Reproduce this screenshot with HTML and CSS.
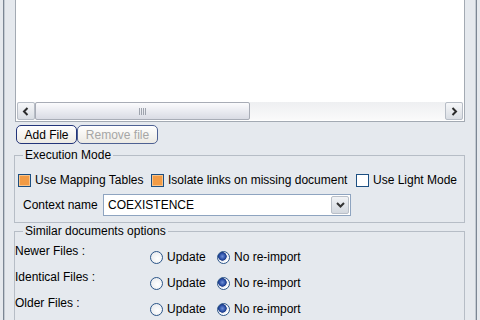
FILE: index.html
```html
<!DOCTYPE html>
<html>
<head>
<meta charset="utf-8">
<link rel="stylesheet" href="styles.css">
</head>
<body>
<div class="window">
  <div class="list">
    <div class="list-body"></div>
    <div class="hscroll">
      <div class="sbtn"><svg width="8" height="9" viewBox="0 0 8 9"><path d="M5.5 1 L2 4.5 L5.5 8" fill="none" stroke="#2b2b2b" stroke-width="2"/></svg></div>
      <div class="track">
        <div class="thumb"><span class="grip"></span></div>
      </div>
      <div class="sbtn"><svg width="8" height="9" viewBox="0 0 8 9"><path d="M2.5 1 L6 4.5 L2.5 8" fill="none" stroke="#2b2b2b" stroke-width="2"/></svg></div>
    </div>
  </div>
  <div class="btn-row">
    <button class="btn">Add File</button>
    <button class="btn disabled">Remove file</button>
  </div>
  <fieldset class="group exec">
    <legend>Execution Mode</legend>
    <div class="checks">
      <label class="check"><span class="box on"></span>Use Mapping Tables</label>
      <label class="check"><span class="box on"></span>Isolate links on missing document</label>
      <label class="check"><span class="box"></span>Use Light Mode</label>
    </div>
    <div class="context">
      <span class="ctx-label">Context name</span>
      <div class="combo">
        <span class="combo-text">COEXISTENCE</span>
        <span class="combo-btn"><svg width="9" height="6" viewBox="0 0 9 6"><path d="M1 1 L4.5 4.5 L8 1" fill="none" stroke="#333" stroke-width="2"/></svg></span>
      </div>
    </div>
  </fieldset>
  <fieldset class="group similar">
    <legend>Similar documents options</legend>
    <div class="opt-row first">
      <span class="opt-label">Newer Files :</span>
      <div class="radios">
        <label class="radio"><span class="dot"></span>Update</label>
        <label class="radio"><span class="dot on"></span>No re-import</label>
      </div>
    </div>
    <div class="opt-row">
      <span class="opt-label">Identical Files :</span>
      <div class="radios">
        <label class="radio"><span class="dot"></span>Update</label>
        <label class="radio"><span class="dot on"></span>No re-import</label>
      </div>
    </div>
    <div class="opt-row">
      <span class="opt-label">Older Files :</span>
      <div class="radios">
        <label class="radio"><span class="dot"></span>Update</label>
        <label class="radio"><span class="dot on"></span>No re-import</label>
      </div>
    </div>
  </fieldset>
</div>
</body>
</html>
```

FILE: styles.css
```css
html, body {
  margin: 0;
  padding: 0;
}
body {
  width: 480px;
  height: 320px;
  overflow: hidden;
  background: #e5e9ee;
  font: 12px "Liberation Sans", Arial, sans-serif;
  color: #000;
}
.window {
  margin: 0 3px;
  height: 320px;
  overflow: hidden;
  border-left: 1px solid #7b8694;
  border-right: 1px solid #7b8694;
  box-shadow: inset 1px 0 0 #c3cad2, inset -1px 0 0 #c3cad2;
  padding: 0 11px;
  display: flex;
  flex-direction: column;
}
.list {
  height: 121px;
  flex: none;
  border: 1px solid #a3aab3;
  border-top: none;
  background: #fff;
  display: flex;
  flex-direction: column;
}
.list-body {
  flex: 1;
}
.hscroll {
  height: 18px;
  margin: 0 1px 1px;
  display: flex;
  background: linear-gradient(#eeeff1, #fafafa);
}
.sbtn {
  width: 18px;
  height: 18px;
  box-sizing: border-box;
  border: 1px solid #b7bdc6;
  border-radius: 2px;
  background: linear-gradient(#f6f7f9, #d9dde3);
  display: flex;
  align-items: center;
  justify-content: center;
}
.track {
  flex: 1;
  display: flex;
}
.thumb {
  width: 215px;
  box-sizing: border-box;
  border: 1px solid #a8acb6;
  border-radius: 2px;
  background: linear-gradient(#fbfbfd, #d9dbe4);
  display: flex;
  align-items: center;
  justify-content: center;
}
.grip {
  width: 7px;
  height: 7px;
  background: repeating-linear-gradient(90deg, #9ea3ad 0 1px, transparent 1px 2px);
}
.btn-row {
  margin: 3px 0 0 1px;
  display: flex;
  flex: none;
}
.btn {
  font: 12px "Liberation Sans", Arial, sans-serif;
  height: 19px;
  padding: 0;
  border: 1px solid #23357a;
  border-radius: 5px;
  background: linear-gradient(#ffffff, #eceae4);
  color: #000;
}
.btn:first-child {
  width: 61px;
}
.btn.disabled {
  width: 81px;
  color: #a6a6a6;
  border-color: #4e6193;
}
.group {
  margin: 0 0 0 -1px;
  padding: 0;
  border: 1px solid #b6bdc6;
  min-inline-size: 0;
  flex: none;
}
.group legend {
  margin-left: 8px;
  padding: 0 2px;
  line-height: 14px;
  height: 14px;
}
.exec {
  margin-top: 4px;
  padding-bottom: 6px;
}
.similar {
  margin-top: 1px;
  padding-bottom: 10px;
}
.checks {
  margin-top: 10px;
  height: 16px;
  display: grid;
  grid-template-columns: 133px 205px auto;
  padding-left: 3px;
}
.check {
  display: flex;
  align-items: center;
  white-space: nowrap;
}
.box {
  width: 13px;
  height: 13px;
  box-sizing: border-box;
  border: 1px solid #1c4f82;
  background: #fff;
  margin-right: 4px;
  flex: none;
}
.box.on {
  background: #f29b45;
  box-shadow: inset 0 0 0 1px #f8c38a;
}
.context {
  margin-top: 6px;
  height: 22px;
  display: flex;
  align-items: center;
}
.ctx-label {
  margin-left: 8px;
  width: 80px;
}
.combo {
  width: 248px;
  height: 22px;
  box-sizing: border-box;
  border: 1px solid #8ea4c0;
  background: #fff;
  display: flex;
  align-items: center;
  padding: 1px;
}
.combo-text {
  flex: 1;
  padding-left: 3px;
}
.combo-btn {
  width: 18px;
  height: 18px;
  box-sizing: border-box;
  border: 1px solid #b9bfc8;
  border-radius: 2px;
  background: linear-gradient(#f1f3f6, #d3d8df);
  display: flex;
  align-items: center;
  justify-content: center;
}
.opt-row {
  height: 26px;
  display: flex;
  align-items: flex-start;
}
.opt-row.first {
  margin-top: 5px;
}
.opt-label {
  width: 135px;
  line-height: 16px;
}
.radios {
  margin-top: 6px;
  display: grid;
  grid-template-columns: 67px auto;
}
.radio {
  display: flex;
  align-items: center;
  height: 16px;
  white-space: nowrap;
}
.dot {
  width: 13px;
  height: 13px;
  box-sizing: border-box;
  border: 1px solid #2b5588;
  border-radius: 50%;
  background: radial-gradient(circle at 60% 60%, #ffffff, #e3e6ea);
  margin-right: 4px;
  flex: none;
}
.dot.on {
  background: radial-gradient(circle at 40% 40%, #6f8fd6 0, #2a4fa6 3px, #1d3a86 4px, #e3e7ef 4.5px, #fff 6px);
}
```
